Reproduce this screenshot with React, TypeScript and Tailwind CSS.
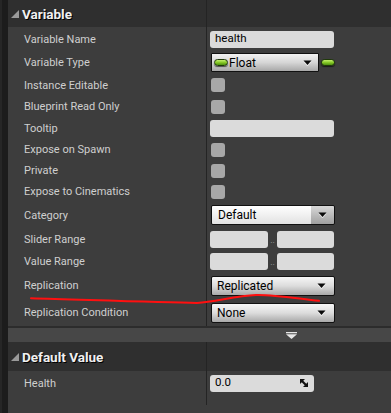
import React from "react";

const Tri = () => (
  <svg width="8" height="8" viewBox="0 0 8 8" className="shrink-0">
    <path d="M8 0 L8 8 L0 8 Z" fill="#9a9a9a" />
  </svg>
);

const Arrow = () => (
  <svg width="9" height="6" viewBox="0 0 9 6">
    <path d="M0.5 1 L8.5 1 L4.5 5.5 Z" fill="#ffffff" opacity="0.6" transform="translate(0 0.8)" />
    <path d="M0.5 0.5 L8.5 0.5 L4.5 5 Z" fill="#0a0a0a" />
  </svg>
);

const Pill = () => (
  <div className="w-[14px] h-[7px] rounded-full border border-[#1f3a08] bg-gradient-to-b from-[#c4f06a] via-[#86c927] to-[#4f8f12] shadow-[0_1px_1px_rgba(0,0,0,0.6)]" />
);

const TextBox = ({ value = "", w = "w-[124px]" }: { value?: string; w?: string }) => (
  <div className={`${w} h-[17px] rounded-[3px] bg-[#dbdbdb] flex items-center pl-[5px] text-[11.5px] text-black`}>
    {value}
  </div>
);

const Check = () => <div className="w-[14px] h-[14px] rounded-[3px] bg-[#a8a8a8]" />;

const Combo = ({ value, w = "w-[124px]" }: { value: string; w?: string }) => (
  <div className={`${w} h-[20px] rounded-[2px] border border-[#111] bg-gradient-to-b from-[#f6f6f6] via-[#dcdcdc] to-[#a9a9a9] flex items-center pl-[5px] pr-[8px] text-[12px] text-black`}>
    <span className="flex-1">{value}</span>
    <Arrow />
  </div>
);

type RowProps = { label: string; h: string; children?: React.ReactNode };

const Row = ({ label, h, children }: RowProps) => (
  <div className={`flex ${h}`}>
    <div className="w-[198px] flex items-center pl-[16px] pt-[2px] text-[11px] text-[#cfcfcf]">{label}</div>
    <div className="flex-1 flex items-center pl-[3px] border-l border-[#242424]">{children}</div>
  </div>
);

export default function App() {
  return (
    <div
      className="relative w-[391px] h-[413px] flex bg-[#3d3d3d] overflow-hidden"
      style={{ fontFamily: "Roboto, 'Liberation Sans', sans-serif" }}
    >
      <div className="w-[8px] shrink-0 bg-[#1c1c1c] border-l-[2px] border-[#262626]" />
      <div className="flex-1 flex flex-col">
        {/* Variable header */}
        <div className="flex h-[27px] bg-[#2f2f2f]">
          <div className="w-[198px] flex items-center gap-[3px] pl-[3px] pt-[1px]">
            <Tri />
            <span className="text-[13.5px] font-bold text-[#f0f0f0] [text-shadow:1px_1px_0_#000]">Variable</span>
          </div>
          <div className="flex-1 border-l border-[#242424]" />
        </div>

        <Row label="Variable Name" h="h-[24px]">
          <TextBox value="health" />
        </Row>
        <Row label="Variable Type" h="h-[23px]">
          <div className="w-[108px] h-[19px] ml-[1px] rounded-[1px] border border-[#111] bg-gradient-to-b from-[#f2f2f2] via-[#d6d6d6] to-[#a8a8a8] flex items-center pl-[2px] pr-[6px] text-[12px] text-black">
            <Pill />
            <span className="flex-1 ml-[1px]">Float</span>
            <Arrow />
          </div>
          <div className="ml-[2px]">
            <Pill />
          </div>
        </Row>
        <Row label="Instance Editable" h="h-[22px]">
          <div className="ml-[1px]"><Check /></div>
        </Row>
        <Row label="Blueprint Read Only" h="h-[21px]">
          <div className="ml-[1px]"><Check /></div>
        </Row>
        <Row label="Tooltip" h="h-[22px]">
          <TextBox />
        </Row>
        <Row label="Expose on Spawn" h="h-[21px]">
          <div className="ml-[1px]"><Check /></div>
        </Row>
        <Row label="Private" h="h-[21px]">
          <div className="ml-[1px]"><Check /></div>
        </Row>
        <Row label="Expose to Cinematics" h="h-[21px]">
          <div className="ml-[1px]"><Check /></div>
        </Row>
        <Row label="Category" h="h-[26px]">
          <div className="w-[124px] h-[20px] ml-[1px] rounded-[2px] border border-[#111] flex overflow-hidden text-[12px] text-black">
            <div className="flex-1 flex items-center pl-[6px] bg-gradient-to-b from-[#ffffff] to-[#e2e2e2]">Default</div>
            <div className="w-[23px] flex items-center justify-center bg-gradient-to-b from-[#d8d8d8] to-[#a0a0a0]">
              <Arrow />
            </div>
          </div>
        </Row>
        <Row label="Slider Range" h="h-[22px]">
          <TextBox w="w-[58px]" />
          <span className="w-[9px] text-center text-[9px] text-[#a0a0a0] leading-none pt-[3px]">..</span>
          <TextBox w="w-[57px]" />
        </Row>
        <Row label="Value Range" h="h-[22px]">
          <TextBox w="w-[58px]" />
          <span className="w-[9px] text-center text-[9px] text-[#a0a0a0] leading-none pt-[3px]">..</span>
          <TextBox w="w-[57px]" />
        </Row>
        <Row label="Replication" h="h-[27px]">
          <div className="ml-[1px]"><Combo value="Replicated" /></div>
        </Row>
        <Row label="Replication Condition" h="h-[27px]">
          <div className="ml-[1px]"><Combo value="None" /></div>
        </Row>

        {/* expander bar */}
        <div className="h-[16px] border-t-[2px] border-[#2c2c2c] bg-[#474747] flex items-center">
          <div className="w-[278px]" />
          <svg width="11" height="7" viewBox="0 0 11 7">
            <rect x="0" y="0" width="11" height="1.3" fill="#e6e6e6" />
            <path d="M0 2.3 L11 2.3 L5.5 7 Z" fill="#e6e6e6" />
          </svg>
        </div>

        {/* Default Value header */}
        <div className="flex h-[29px] bg-[#2f2f2f]">
          <div className="w-[198px] flex items-center gap-[3px] pl-[3px] pt-[1px]">
            <Tri />
            <span className="text-[13.5px] font-bold text-[#f0f0f0] [text-shadow:1px_1px_0_#000]">Default Value</span>
          </div>
          <div className="flex-1 border-l border-[#242424]" />
        </div>
        <Row label="Health" h="h-[24px]">
          <div className="w-[104px] h-[17px] rounded-[3px] bg-[#dbdbdb] flex items-center pl-[5px] pr-[6px] text-[11.5px] text-black">
            <span className="flex-1">0.0</span>
            <svg width="8" height="8" viewBox="0 0 8 8">
              <path d="M0 0 L5 0 L0 5 Z" fill="#111" />
              <path d="M8 8 L3 8 L8 3 Z" fill="#111" />
              <path d="M1 1 L7 7" stroke="#111" strokeWidth="2.2" />
            </svg>
          </div>
        </Row>
        <div className="flex h-[10px]">
          <div className="w-[198px]" />
          <div className="flex-1 border-l border-[#242424]" />
        </div>
      </div>

      {/* hand-drawn red annotation */}
      <svg className="absolute left-0 top-0 pointer-events-none" width="391" height="413">
        <path
          d="M31 298.3 C 90 300, 160 302.5, 197 303 C 215 302, 235 296, 256 295 C 275 294.5, 300 299, 319 300.8"
          fill="none"
          stroke="#ff1010"
          strokeWidth="2"
          strokeLinecap="round"
        />
      </svg>
    </div>
  );
}
